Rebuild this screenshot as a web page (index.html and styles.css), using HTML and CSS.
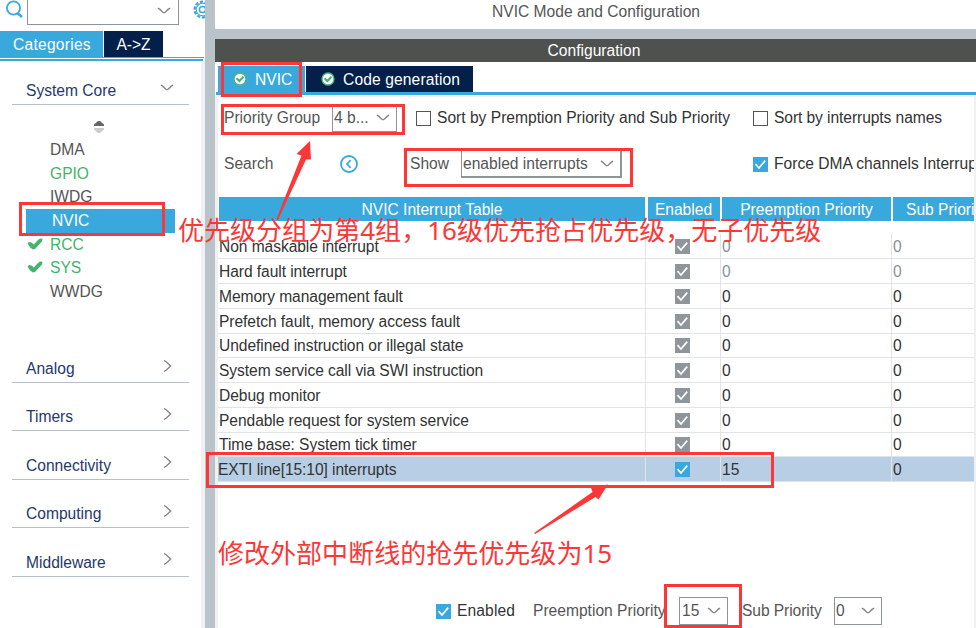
FILE: index.html
```html
<!DOCTYPE html>
<html lang="en">
<head>
<meta charset="utf-8">
<title>NVIC Mode and Configuration</title>
<link rel="stylesheet" href="styles.css">
</head>
<body>
<svg class="defs" width="0" height="0">
  <symbol id="down" viewBox="0 0 14 8"><path d="M1 1.2 L3 2.4 L5.5 5 L7 5.8 L8.5 5 L11 2.4 L13 1.2" fill="none" stroke="#858585" stroke-width="1.4"/></symbol>
  <symbol id="right" viewBox="0 0 9 14"><path d="M1 1.5 L3.4 3 L7.6 7 L3.4 11 L1 12.5" fill="none" stroke="#858585" stroke-width="1.4"/></symbol>
  <symbol id="tick" viewBox="0 0 15 15"><path d="M2.5 7.2 L6 11 L12.2 3.6" fill="none" stroke="#fff" stroke-width="1.7"/></symbol>
  <symbol id="done" viewBox="0 0 16 12"><path d="M.5 5.6 L2 4 L4.5 4.4 L6.8 6.6 L11 2 L13 .6 L15.5 .8 L15 3.6 L12.600 6 L8 11 L5.800 11.600 L3 9.200 Z" fill="#43b36d"/></symbol>
  <symbol id="badge" viewBox="0 0 14 14"><circle cx="7" cy="7" r="6" fill="#fff" stroke="#4cb87c" stroke-width="1.3"/><path d="M3.5 6.2 L6.4 9 L10.5 4.8" fill="none" stroke="#43b36d" stroke-width="2"/></symbol>
</svg>
<div class="app">
  <aside class="sidebar">
    <div class="searchbar">
      <svg class="magnifier" width="18" height="20" viewBox="0 0 18 20"><circle cx="8.500" cy="8" r="6.600" fill="none" stroke="#39a8dc" stroke-width="1.800"/><path d="M12.400 13 L17 17" stroke="#39a8dc" stroke-width="2.600"/></svg>
      <div class="combo filter"><svg class="down"><use href="#down"/></svg></div>
      <svg class="gear" width="12" height="20" viewBox="0 0 12 20"><circle cx="9.500" cy="9.500" r="7.900" fill="none" stroke="#39a8dc" stroke-width="2.200" stroke-dasharray="3.200 1.700"/><circle cx="9.500" cy="9.500" r="6.300" fill="none" stroke="#39a8dc" stroke-width="1.100"/><circle cx="9.500" cy="9.500" r="3.100" fill="none" stroke="#39a8dc" stroke-width="1.500"/></svg>
    </div>
    <div class="side-tabs"><span class="tab on">Categories</span><span class="tab az">A-&gt;Z</span></div>
    <div class="group first"><span>System Core</span><svg class="down"><use href="#down"/></svg></div>
    <svg class="sorter" width="12" height="14" viewBox="0 0 12 14"><path d="M1 6 V4.500 L5 1 H7 L11 4.500 V6Z" fill="#666"/><path d="M1 8 V9.500 L5 13 H7 L11 9.500 V8Z" fill="#ccc"/></svg>
    <ul class="items">
      <li>DMA</li>
      <li class="ok">GPIO</li>
      <li>IWDG</li>
      <li class="selected">NVIC</li>
      <li class="ok"><svg class="done"><use href="#done"/></svg>RCC</li>
      <li class="ok"><svg class="done"><use href="#done"/></svg>SYS</li>
      <li>WWDG</li>
    </ul>
    <div class="groups">
      <div class="group"><span>Analog</span><svg class="right"><use href="#right"/></svg></div>
      <div class="group"><span>Timers</span><svg class="right"><use href="#right"/></svg></div>
      <div class="group"><span>Connectivity</span><svg class="right"><use href="#right"/></svg></div>
      <div class="group"><span>Computing</span><svg class="right"><use href="#right"/></svg></div>
      <div class="group"><span>Middleware</span><svg class="right"><use href="#right"/></svg></div>
    </div>
  </aside>
  <div class="splitter"></div>
  <main class="main">
    <div class="title">NVIC Mode and Configuration</div>
    <div class="config">Configuration</div>
    <div class="tabs"><span class="tab nvic"><svg class="badge"><use href="#badge"/></svg><span>NVIC</span></span><span class="tab code"><svg class="badge"><use href="#badge"/></svg><span>Code generation</span></span></div>
    <div class="panel">
      <div class="options">
        <span class="lbl group-lbl">Priority Group</span>
        <div class="combo bits">4 b...<svg class="down"><use href="#down"/></svg></div>
        <span class="box"></span><span class="sort-a">Sort by Premption Priority and Sub Priority</span>
        <span class="box"></span><span class="sort-b">Sort by interrupts names</span>
      </div>
      <div class="options second">
        <span class="lbl search-lbl">Search</span>
        <svg class="prev" width="18" height="18" viewBox="0 0 18 18"><circle cx="9" cy="9" r="8" fill="none" stroke="#39a8dc" stroke-width="1.800"/><path d="M10.600 5.200 L7 9 L10.600 12.800" fill="none" stroke="#39a8dc" stroke-width="1.700"/></svg>
        <span class="lbl show-lbl">Show</span>
        <div class="combo show">enabled interrupts<svg class="down"><use href="#down"/></svg></div>
        <span class="box blue"><svg><use href="#tick"/></svg></span><span class="force">Force DMA channels Interrupts</span>
      </div>
      <div class="thead"><span>NVIC Interrupt Table</span><span class="h-en">Enabled</span><span>Preemption Priority</span><span>Sub Priority</span></div>
      <div class="tbody">
        <div class="row off"><span>Non maskable interrupt</span><span><i class="box gray"><svg><use href="#tick"/></svg></i></span><span>0</span><span>0</span></div>
        <div class="row off"><span>Hard fault interrupt</span><span><i class="box gray"><svg><use href="#tick"/></svg></i></span><span>0</span><span>0</span></div>
        <div class="row"><span>Memory management fault</span><span><i class="box gray"><svg><use href="#tick"/></svg></i></span><span>0</span><span>0</span></div>
        <div class="row"><span>Prefetch fault, memory access fault</span><span><i class="box gray"><svg><use href="#tick"/></svg></i></span><span>0</span><span>0</span></div>
        <div class="row short"><span>Undefined instruction or illegal state</span><span><i class="box gray"><svg><use href="#tick"/></svg></i></span><span>0</span><span>0</span></div>
        <div class="row"><span>System service call via SWI instruction</span><span><i class="box gray"><svg><use href="#tick"/></svg></i></span><span>0</span><span>0</span></div>
        <div class="row"><span>Debug monitor</span><span><i class="box gray"><svg><use href="#tick"/></svg></i></span><span>0</span><span>0</span></div>
        <div class="row"><span>Pendable request for system service</span><span><i class="box gray"><svg><use href="#tick"/></svg></i></span><span>0</span><span>0</span></div>
        <div class="row short"><span>Time base: System tick timer</span><span><i class="box gray"><svg><use href="#tick"/></svg></i></span><span>0</span><span>0</span></div>
        <div class="row picked"><span>EXTI line[15:10] interrupts</span><span><i class="box blue"><svg><use href="#tick"/></svg></i></span><span>15</span><span>0</span></div>
      </div>
      <div class="footer">
        <span class="box blue"><svg><use href="#tick"/></svg></span><span class="f-en">Enabled</span>
        <span class="lbl f-pre">Preemption Priority</span>
        <div class="combo f-fifteen">15<svg class="down"><use href="#down"/></svg></div>
        <span class="lbl f-sub">Sub Priority</span>
        <div class="combo f-zero">0<svg class="down"><use href="#down"/></svg></div>
      </div>
    </div>
  </main>
</div>
<div class="notes">
  <svg width="976" height="628" viewBox="0 0 976 628">
    <g fill="none" stroke="#fc3737" stroke-width="3">
      <rect x="222.500" y="63.500" width="78" height="32"/>
      <rect x="222.500" y="105.500" width="181" height="28"/>
      <rect x="405.500" y="149.500" width="226" height="36"/>
      <rect x="20.500" y="203.500" width="143" height="31"/>
      <rect x="207.500" y="453.500" width="565" height="33"/>
      <rect x="665.500" y="585.500" width="75" height="41"/>
    </g>
    <path d="M310 141 L296.500 154 L301.500 155.500 L276 220 L278 220 L306 159.500 L311 159.500 Z" fill="#fc3737"/>
    <path d="M608 484.500 L591 488 L592.500 492 L534 533 L535 534 L595.500 497 L598.500 499.500 Z" fill="#fc3737"/>
  </svg>
  <div class="note top">优先级分组为第4组，16级优先抢占优先级，无子优先级</div>
  <div class="note bottom">修改外部中断线的抢先优先级为15</div>
</div>
</body>
</html>
```

FILE: styles.css
```css
* { box-sizing: border-box; }
body {
  margin: 0;
  width: 976px;
  height: 628px;
  overflow: hidden;
  position: relative;
  background: #fff;
  color: #333;
  font-family: "Liberation Sans", Arial, sans-serif;
  font-size: 15.6px;
  line-height: 20px;
  white-space: nowrap;
}
.defs { position: absolute; }
svg { display: block; flex: none; }
.down { width: 14px; height: 8px; }
.right { width: 9px; height: 14px; }
.app { display: grid; grid-template-columns: 205px 10px 761px; height: 628px; }
.splitter { background: #b8c4ca; }
.lbl { color: #555; }

.sidebar { overflow: hidden; background: linear-gradient(#f0f0f0, #f0f0f0) 201px 61px / 4px 567px no-repeat; }
.searchbar { display: flex; height: 31px; }
.magnifier { margin-left: 5px; }
.combo {
  display: flex;
  align-items: center;
  justify-content: space-between;
  border: 1px solid #8e959a;
  color: #555;
  background: #fff;
  flex: none;
}
.filter { width: 152px; height: 26px; margin: -1px 0 0 4px; padding: 0 7px 2px; justify-content: flex-end; }
.gear { margin-left: 14px; }
.side-tabs { display: flex; gap: 1px; height: 30px; border-bottom: 2px solid #39a8dc; padding-bottom: 2px; width: 203px; position: relative; }
.side-tabs::after { content: ""; position: absolute; left: 0; bottom: 1px; width: 204px; height: 1px; background: #39a8dc; }
.tab { display: flex; align-items: center; color: #fff; background: #39a8dc; flex: none; }
.side-tabs .tab { padding-top: 2px; }
.side-tabs .on { width: 103px; padding-left: 13px; letter-spacing: .25px; }
.az { width: 59px; justify-content: center; background: #02204a; }

.group { display: flex; justify-content: space-between; align-items: center; width: 177px; margin-left: 12px; padding: 0 17px 0 14px; color: #26386a; border-bottom: 1px solid #b4c0cc; }
.group span { padding-top: 2px; }
.group.first { height: 44px; padding-top: 15px; padding-right: 15px; }
.group.first .down { margin-bottom: 5px; }
.sorter { margin: 15px 0 0 93px; }
.items { list-style: none; margin: 4px 0 0; padding: 0; color: #555; }
.items li { height: 23.7px; line-height: 24px; padding-left: 50px; position: relative; }
.items .ok { color: #43b36d; }
.items .selected { color: #fff; background: #39a8dc; margin-left: 26px; width: 149px; padding-left: 26px; }
.done { width: 16px; height: 12px; position: absolute; left: 27px; top: 5px; }
.groups { display: grid; grid-template-rows: 48px 48px 49px 48px 49px; margin-top: 31px; }
.groups .group { padding-top: 20px; }
.groups .right { margin-bottom: 5px; }

.main { overflow: hidden; display: flex; flex-direction: column; }
.title { height: 29px; padding: 2px 0 0 1px; text-align: center; color: #555; flex: none; }
.config { height: 33px; border-top: 10px solid #b8c4ca; background: #4f514f; color: #fff; text-align: center; line-height: 23px; padding-right: 3px; flex: none; }
.tabs { display: flex; gap: 1px; height: 33px; padding: 4px 0 0 2px; border-bottom: 3px solid #39a8dc; margin-left: 1px; flex: none; }
.tab .badge { width: 14px; height: 14px; }
.tabs .tab > span { padding-top: 1px; }
.nvic { width: 87px; padding-left: 15px; gap: 8px; }
.code { width: 167px; padding-left: 15px; gap: 8px; letter-spacing: .12px; background: #02204a; }
.panel { border: solid #f0f0f0; border-width: 2px 2px 0 3px; height: 533px; overflow: hidden; }
.options { display: flex; align-items: center; height: 42px; padding-left: 6px; }
.options > * { flex: none; }
.box { display: block; width: 15px; height: 15px; flex: none; border: 1px solid #555; }
.box svg { width: 15px; height: 15px; }
.box.blue { border: 0; background: #39a8dc; }
.box.gray { border: 0; background: #8e959b; }
.group-lbl { width: 108px; }
.bits { width: 65px; height: 28px; padding: 0 6px 0 1px; }
.options .bits + .box { margin-left: 19px; }
.sort-a { margin-left: 6px; width: 316px; }
.sort-a + .box { margin-right: 6px; }
.sort-b { letter-spacing: -.08px; }
.options.second { height: 50px; }
.search-lbl { width: 116px; }
.prev { margin-right: 52px; }
.show-lbl { width: 51px; }
.show { width: 161px; height: 28px; padding: 0 6px 0 1px; border-bottom-width: 2px; border-right-width: 2px; }
.second .box { margin: 0 6px 0 131px; }

.thead { display: grid; grid-template-columns: 426px 73px 169px 81px; column-gap: 2px; margin: 8px 0 13px 1px; height: 24px; color: #fff; line-height: 25px; text-align: center; }
.thead span { background: #39a8dc; overflow: hidden; }
.thead span:last-child { text-align: left; padding-left: 13px; }
.thead .h-en { box-shadow: inset 1px 0 #fff; }
.row { display: grid; grid-template-columns: 428px 75px 171px 82px; height: 25px; line-height: 25px; border-bottom: 1px solid #e1e4e7; }
.row.short { height: 24px; line-height: 24px; }
.row > span { padding-left: 1px; border-right: 1px solid #e1e4e7; }
.row > span:first-child { letter-spacing: -.07px; }
.row > span:last-child { border-right: 0; }
.row > span:nth-child(2) { display: flex; align-items: center; justify-content: center; padding: 0 1px 1px 0; }
.row.off > span:nth-child(n+3) { color: #8b929a; }
.picked { background: #b8cee5; }
.picked > span:first-child { padding-left: 0; }
.footer { display: flex; align-items: center; height: 28px; margin-top: 115px; padding-left: 218px; }
.f-en { margin-left: 6px; width: 76px; letter-spacing: .12px; }
.f-pre { width: 146px; }
.combo.f-fifteen { width: 49px; height: 28px; padding: 0 6px 0 2px; margin-right: 14px; }
.f-sub { width: 92px; letter-spacing: -.08px; }
.combo.f-zero { width: 48px; height: 28px; padding: 0 6px 0 1px; }

/* Red markup lying over the window */
.notes { position: absolute; inset: 0; }
.notes svg { position: absolute; }
.note { position: absolute; color: #fc3737; font-family: "Noto Sans", "Noto Sans CJK SC", sans-serif; font-size: 26px; line-height: 36px; letter-spacing: .03px; }
.note.top { left: 178px; top: 212px; }
.note.bottom { left: 218px; top: 535px; }
```
